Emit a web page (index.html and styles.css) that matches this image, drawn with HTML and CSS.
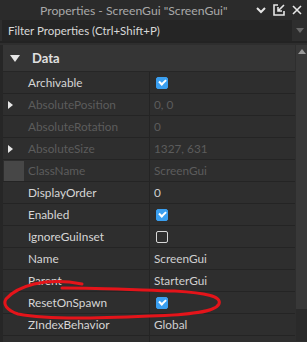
FILE: index.html
```html
<!DOCTYPE html>
<html lang="en">
<head>
    <meta charset="UTF-8">
    <title>Properties</title>
    <link rel="stylesheet" href="styles.css">
</head>
<body>
    <div class="panel">
        <!-- Title bar -->
        <div class="titlebar">
            <span class="title">Properties - ScreenGui "ScreenGui"</span>
            <div class="win-icons">
                <svg width="12" height="12" viewBox="0 0 12 12"><path d="M2 4 L6 8 L10 4" fill="none" stroke="#e6e6e6" stroke-width="2"/></svg>
                <svg width="14" height="14" viewBox="0 0 14 14"><path d="M6 2 H2 V12 H12 V8" fill="none" stroke="#e6e6e6" stroke-width="1.6"/><path d="M12 2 L6 8 M6 4 V8 H10" fill="none" stroke="#e6e6e6" stroke-width="1.6"/></svg>
                <svg width="12" height="12" viewBox="0 0 12 12"><path d="M2 2 L10 10 M10 2 L2 10" fill="none" stroke="#e6e6e6" stroke-width="1.6"/></svg>
            </div>
        </div>

        <!-- Filter -->
        <div class="filter">
            <div class="filter-input">Filter Properties (Ctrl+Shift+P)</div>
            <div class="filter-drop"><svg width="8" height="5" viewBox="0 0 8 5"><path d="M0 0 H8 L4 5 Z" fill="#6a6a6a"/></svg></div>
        </div>

        <div class="body">
            <div class="list">
                <div class="section-head">
                    <svg width="10" height="7" viewBox="0 0 10 7"><path d="M0 0 H10 L5 7 Z" fill="#e6e6e6"/></svg>
                    <span>Data</span>
                </div>

                <div class="row">
                    <div class="gutter"></div>
                    <div class="name">Archivable</div>
                    <div class="value"><span class="check on"></span></div>
                </div>
                <div class="row off">
                    <div class="gutter"><span class="expand"></span></div>
                    <div class="name">AbsolutePosition</div>
                    <div class="value">0, 0</div>
                </div>
                <div class="row off">
                    <div class="gutter"></div>
                    <div class="name">AbsoluteRotation</div>
                    <div class="value">0</div>
                </div>
                <div class="row off">
                    <div class="gutter"><span class="expand"></span></div>
                    <div class="name">AbsoluteSize</div>
                    <div class="value">1327, 631</div>
                </div>
                <div class="row off">
                    <div class="gutter"><span class="mark"></span></div>
                    <div class="name">ClassName</div>
                    <div class="value">ScreenGui</div>
                </div>
                <div class="row">
                    <div class="gutter"></div>
                    <div class="name">DisplayOrder</div>
                    <div class="value">0</div>
                </div>
                <div class="row">
                    <div class="gutter"></div>
                    <div class="name">Enabled</div>
                    <div class="value"><span class="check on"></span></div>
                </div>
                <div class="row">
                    <div class="gutter"></div>
                    <div class="name">IgnoreGuiInset</div>
                    <div class="value"><span class="check"></span></div>
                </div>
                <div class="row">
                    <div class="gutter"></div>
                    <div class="name">Name</div>
                    <div class="value">ScreenGui</div>
                </div>
                <div class="row">
                    <div class="gutter"></div>
                    <div class="name">Parent</div>
                    <div class="value">StarterGui</div>
                </div>
                <div class="row">
                    <div class="gutter"></div>
                    <div class="name">ResetOnSpawn</div>
                    <div class="value"><span class="check on"></span></div>
                </div>
                <div class="row">
                    <div class="gutter"></div>
                    <div class="name">ZIndexBehavior</div>
                    <div class="value">Global</div>
                </div>
                <div class="row">
                    <div class="gutter"></div>
                    <div class="name"></div>
                    <div class="value"></div>
                </div>
            </div>
            <div class="scrollbar">
                <div class="thumb">
                    <svg width="8" height="5" viewBox="0 0 8 5"><path d="M0 5 H8 L4 0 Z" fill="#9a9a9a"/></svg>
                </div>
            </div>
        </div>

        <!-- red hand-drawn circle around ResetOnSpawn -->
        <svg class="annotation" width="307" height="342" viewBox="0 0 307 342">
            <path d="M62 288 C100 288 140 290 175 291 C205 293 222 296 219 304 C215 312 190 315 150 316 C100 318 50 320 18 314 C6 310 3 304 6 299 C12 292 22 287 34 284 C48 281 66 281 82 284" fill="none" stroke="#e4141a" stroke-width="3" stroke-linecap="round"/>
        </svg>
    </div>
</body>
</html>
```

FILE: styles.css
```css
body {
    margin: 0;
    background-color: #2e2e2e;
    font-family: Lato, "Noto Sans", sans-serif;
}
.panel {
    position: relative;
    width: 307px;
    height: 342px;
    background-color: #2e2e2e;
    overflow: hidden;
}
.titlebar {
    height: 20px;
    display: flex;
    align-items: center;
    background-color: #2b2b2b;
}
.title {
    flex: 1;
    padding-left: 40px;
    color: #a9a9a9;
    font-size: 12.2px;
    white-space: nowrap;
}
.win-icons {
    display: flex;
    align-items: center;
    gap: 5px;
    padding-right: 4px;
}
.filter {
    height: 21px;
    display: flex;
    border-bottom: 2px solid #232323;
}
.filter-input {
    flex: 1;
    margin-left: 2px;
    background-color: #252525;
    color: #d8d8d8;
    font-size: 11.5px;
    line-height: 21px;
    padding-left: 6px;
}
.filter-drop {
    width: 15px;
    display: flex;
    align-items: center;
    justify-content: center;
}
.body {
    display: flex;
    margin-top: 2px;
}
.list {
    flex: 1;
    border-left: 3px solid #262626;
}
.section-head {
    height: 26px;
    display: flex;
    align-items: center;
    gap: 12px;
    padding-left: 7px;
    background-color: #353535;
    border-bottom: 1px solid #262626;
    color: #e0e0e0;
    font-size: 13px;
    font-weight: bold;
}
.row {
    height: 21px;
    display: flex;
    border-bottom: 1px solid #242424;
    font-size: 11.8px;
}
.gutter {
    width: 21px;
    display: flex;
    align-items: center;
    justify-content: center;
}
.expand {
    width: 0;
    height: 0;
    border-top: 4px solid transparent;
    border-bottom: 4px solid transparent;
    border-left: 5px solid #e6e6e6;
    margin-left: -6px;
}
.mark {
    width: 20px;
    height: 20px;
    background-color: #474747;
}
.name {
    width: 121px;
    padding-left: 4px;
    border-right: 1px solid #242424;
    color: #d6d6d6;
    line-height: 21px;
    white-space: nowrap;
}
.value {
    flex: 1;
    padding-left: 4px;
    color: #d0d0d0;
    line-height: 21px;
    display: flex;
    align-items: center;
}
.row.off .name,
.row.off .value {
    color: #5c5c5c;
}
.check {
    width: 10px;
    height: 10px;
    border: 1.5px solid #d8d8d8;
    border-radius: 2px;
    margin-left: 2px;
    position: relative;
}
.check.on {
    background-color: #3a9ff0;
    border-color: #3a9ff0;
}
.check.on::after {
    content: "";
    position: absolute;
    left: 2px;
    top: 1px;
    width: 5px;
    height: 3px;
    border-left: 2px solid #fff;
    border-bottom: 2px solid #fff;
    transform: rotate(-45deg);
}
.scrollbar {
    width: 11px;
    margin-left: 1px;
    background-color: #2a2a2a;
    height: 296px;
}
.thumb {
    height: 264px;
    background-color: #383838;
    display: flex;
    justify-content: center;
    padding-top: 4px;
    box-sizing: border-box;
}
.annotation {
    position: absolute;
    left: 0;
    top: 0;
}
```
